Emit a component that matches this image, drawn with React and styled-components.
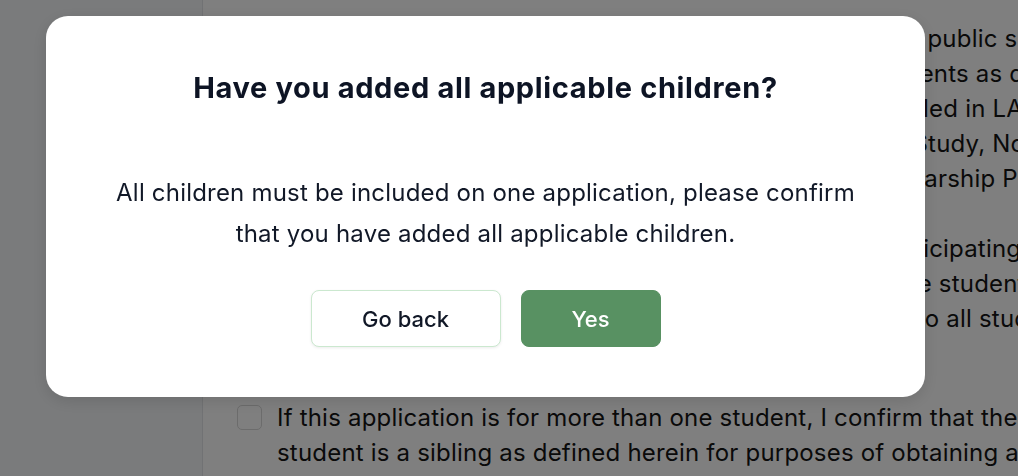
import React from 'react'
import styled, { createGlobalStyle } from 'styled-components'

const GlobalStyle = createGlobalStyle`
  html, body {
    margin: 0;
    padding: 0;
    height: 100%;
    overflow: hidden;
  }
  body {
    font-family: 'Inter', 'Liberation Sans', sans-serif;
    background: #fff;
  }
`

const paragraphs = [
  [
    'I certify that all of the students listed are eligible to attend a public school',
    'school and meets the income requirements for eligible students as defined by',
    'by the program rules, and that the student is currently enrolled in LA schools',
    'school or programs such as Course Choice and Course of Study, Nonpublic',
    'Nonpublic Schools Early Childhood Development or a Scholarship Program.',
  ],
  [
    'I understand that the scholarship can only be used at a participating school',
    'school, and that funds are sent to the school directly, for the student',
    'The rules and conditions of the scholarship program apply to all students.',
  ],
]

const App = () => {
  return (
    <Page>
      <GlobalStyle />
      <Sidebar />
      <Main>
        {paragraphs.map((lines, i) => (
          <Paragraph key={i}>
            {lines.map((line) => (
              <Line key={line}>{line}</Line>
            ))}
          </Paragraph>
        ))}
        <CheckRow>
          <Checkbox type='checkbox' />
          <div>
            <Line>If this application is for more than one student, I confirm that the other</Line>
            <Line>student is a sibling as defined herein for purposes of obtaining an award</Line>
          </div>
        </CheckRow>
      </Main>

      <Overlay>
        <Modal role='dialog'>
          <Title>Have you added all applicable children?</Title>
          <Body>
            All children must be included on one application, please confirm
            <br />
            that you have added all applicable children.
          </Body>
          <Actions>
            <Button>Go back</Button>
            <Button $primary>Yes</Button>
          </Actions>
        </Modal>
      </Overlay>
    </Page>
  )
}

const Page = styled.div`
  display: grid;
  grid-template-columns: 203px 1fr;
  height: 100vh;
  overflow: hidden;
`

const Sidebar = styled.aside`
  background: #f4f6f8;
  border-right: 1px solid #e3e5e8;
`

const Main = styled.main`
  padding: 21px 0 0 34px;
  font-family: 'Inter', 'Liberation Sans', sans-serif;
  font-size: 24px;
  line-height: 35px;
  letter-spacing: 0.2px;
  color: #141414;
  overflow: hidden;
  min-width: 0;
`

const Paragraph = styled.p`
  margin: 0 0 35px;
`

const Line = styled.span`
  display: block;
  white-space: nowrap;
`

const CheckRow = styled.label`
  display: flex;
  gap: 15px;
  align-items: flex-start;
  margin-top: 64px;
`

const Checkbox = styled.input`
  appearance: none;
  flex: none;
  width: 25px;
  height: 25px;
  margin: 5px 0 0;
  border: 1.5px solid #d8d8d8;
  border-radius: 5px;
  background: #fff;
`

const Overlay = styled.div`
  position: fixed;
  inset: 0;
  background: rgba(0, 0, 0, 0.5);
  display: flex;
  align-items: flex-start;
  padding: 16px 0 0 46px;
`

const Modal = styled.div`
  width: 879px;
  height: 381px;
  box-sizing: border-box;
  background: #fff;
  border-radius: 22px;
  box-shadow: 0 4px 16px rgba(0, 0, 0, 0.12);
  padding: 56px 20px 0;
  display: flex;
  flex-direction: column;
  align-items: center;
  text-align: center;
`

const Title = styled.h2`
  margin: 0;
  font-size: 29px;
  line-height: 32px;
  font-weight: 700;
  color: #0d1424;
  letter-spacing: 0.65px;
`

const Body = styled.p`
  margin: 68px 0 0;
  font-size: 24px;
  line-height: 41px;
  letter-spacing: 0.2px;
  color: #111827;
`

const Actions = styled.div`
  display: flex;
  gap: 20px;
  margin-top: 36px;
`

const Button = styled.button`
  height: 57px;
  width: ${(p) => (p.$primary ? '140px' : '190px')};
  border-radius: 8px;
  font-family: 'Inter', sans-serif;
  font-size: 22px;
  font-weight: 500;
  cursor: pointer;
  background: ${(p) => (p.$primary ? '#589162' : '#fff')};
  color: ${(p) => (p.$primary ? '#fff' : '#111827')};
  border: 1px solid ${(p) => (p.$primary ? '#589162' : '#cbe8cf')};
  box-shadow: ${(p) => (p.$primary ? 'none' : '0 1px 3px rgba(0, 0, 0, 0.08)')};
`

export default App
